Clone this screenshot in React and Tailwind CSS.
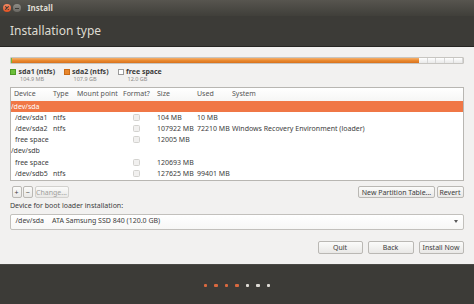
import React from 'react';

const columns = [
  { label: 'Device', w: 'w-[40px]', pad: 'pl-[3px]' },
  { label: 'Type', w: 'w-[24px]', pad: 'pl-[2px]' },
  { label: 'Mount point', w: 'w-[46px]', pad: 'pl-[2px]' },
  { label: 'Format?', w: 'w-[34px]', pad: 'pl-[2px]' },
  { label: 'Size', w: 'w-[40px]', pad: 'pl-[2px]' },
  { label: 'Used', w: 'w-[35px]', pad: 'pl-[2px]' },
];

const rows = [
  { device: '/dev/sda', top: true, selected: true },
  { device: '/dev/sda1', type: 'ntfs', check: true, size: '104 MB', used: '10 MB' },
  { device: '/dev/sda2', type: 'ntfs', check: true, size: '107922 MB', used: '72210 MB', system: 'Windows Recovery Environment (loader)' },
  { device: 'free space', check: true, size: '12005 MB' },
  { device: '/dev/sdb', top: true },
  { device: 'free space', check: true, size: '120693 MB' },
  { device: '/dev/sdb5', type: 'ntfs', check: true, size: '127625 MB', used: '99401 MB' },
];

const legend = [
  { name: 'sda1 (ntfs)', size: '104.9 MB', swatch: 'bg-[#6cbf3a] border-[#4f9a25]', w: 'w-[53.5px]' },
  { name: 'sda2 (ntfs)', size: '107.9 GB', swatch: 'bg-[#e8862c] border-[#c96a16]', w: 'w-[54px]' },
  { name: 'free space', size: '12.0 GB', swatch: 'bg-white border-[#9a9a9a]', w: 'w-[60px]' },
];

function Btn({ children, className = '', disabled }) {
  return (
    <div
      className={`flex items-center justify-center rounded-[2px] border bg-gradient-to-b from-[#fbfbfa] to-[#e9e8e6] text-[7px] leading-none ${
        disabled ? 'text-[#a09f9c] border-[#d2d1ce]' : 'text-[#3c3c3c] border-[#bab8b4]'
      } ${className}`}
    >
      {children}
    </div>
  );
}

export default function App() {
  return (
    <div className="w-[474px] h-[304px] flex flex-col bg-[#3c3b37] font-['Noto_Sans',sans-serif] text-[#3c3c3c] overflow-hidden">
      {/* Title bar */}
      <div className="h-[16px] flex items-center pl-[3px] bg-gradient-to-b from-[#57554f] to-[#403f3a]">
        <div className="w-[8px] h-[8px] rounded-full bg-gradient-to-b from-[#f58a62] to-[#df4f1d] flex items-center justify-center">
          <svg viewBox="0 0 8 8" className="w-[8px] h-[8px]">
            <path d="M2.6 2.6 L5.4 5.4 M5.4 2.6 L2.6 5.4" stroke="#3c3b37" strokeWidth="1.1" strokeLinecap="round" />
          </svg>
        </div>
        <div className="ml-[1.5px] w-[8px] h-[8px] rounded-full bg-gradient-to-b from-[#8f8d87] to-[#6a6863] flex items-center justify-center">
          <div className="w-[4px] h-[1px] bg-[#3c3b37]" />
        </div>
        <span className="ml-[7px] text-[8px] font-bold text-[#dfdbd2] leading-none">Install</span>
      </div>

      {/* Header */}
      <div className="h-[31px] flex items-center pl-[10px] border-b border-[#262522]">
        <span className="text-[12px] text-[#dfdbd2] leading-none">Installation type</span>
      </div>

      {/* Content */}
      <div className="h-[216.5px] bg-[#f2f1f0] pl-[10px] pr-[10.5px] flex flex-col">
        {/* Partition bar */}
        <div className="mt-[10px] h-[6.5px] flex border border-[#c7c5c1] rounded-[1px] overflow-hidden">
          <div className="w-[1px] bg-[#6cbf3a]" />
          <div className="w-[407px] bg-gradient-to-b from-[#f5b06a] via-[#ea8a30] to-[#d9721c]" />
          <div className="flex-1 flex bg-gradient-to-b from-[#ffffff] to-[#e9e9e9]">
            {[0, 1, 2, 3, 4].map((i) => (
              <div key={i} className="flex-1 border-r border-[#d6d6d6]" />
            ))}
          </div>
        </div>

        {/* Legend */}
        <div className="mt-[4px] flex">
          {legend.map((l) => (
            <div key={l.name} className={`flex gap-[2.5px] ${l.w}`}>
              <div className={`mt-[1.5px] w-[6px] h-[6px] border ${l.swatch}`} />
              <div className="flex flex-col">
                <span className="text-[7px] leading-[8px] font-bold text-[#3c3c3c] whitespace-nowrap">{l.name}</span>
                <span className="text-[5.5px] leading-[7px] pl-[1.5px] text-[#8d8c89] whitespace-nowrap">{l.size}</span>
              </div>
            </div>
          ))}
        </div>

        {/* Partition table */}
        <div className="mt-[4px] h-[94.5px] border border-[#b8b6b2] bg-white flex flex-col overflow-hidden">
          <div className="h-[13.5px] flex items-center text-[7px] text-[#555] bg-gradient-to-b from-white to-[#f6f6f5] shrink-0">
            {columns.map((c) => (
              <div key={c.label} className={`${c.w} ${c.pad} whitespace-nowrap`}>{c.label}</div>
            ))}
            <div className="flex-1 pl-[2px]">System</div>
          </div>
          {rows.map((r, i) => (
            <div
              key={i}
              className={`h-[11.1px] shrink-0 flex items-center text-[7px] leading-none ${
                r.selected ? 'bg-[#f07746] text-white' : 'text-[#3c3c3c]'
              }`}
            >
              <div className={`w-[40px] whitespace-nowrap ${r.top ? 'pl-0' : 'pl-[4px]'}`}>{r.device}</div>
              <div className="w-[24px] pl-[2px]">{r.type}</div>
              <div className="w-[46px]" />
              <div className="w-[34px] pl-[12px] flex">
                {r.check && <div className="w-[7px] h-[7px] rounded-[1.5px] border border-[#d3d2cf] bg-[#f1f0ef]" />}
              </div>
              <div className="w-[40px] pl-[2px] whitespace-nowrap">{r.size}</div>
              <div className="w-[35px] pl-[2px] whitespace-nowrap">{r.used}</div>
              <div className="flex-1 pl-[2px] whitespace-nowrap">{r.system}</div>
            </div>
          ))}
        </div>

        {/* Edit buttons */}
        <div className="mt-[5px] h-[12px] flex justify-between">
          <div className="flex pl-[1.5px] gap-[1.5px]">
            <Btn className="w-[10px]">+</Btn>
            <Btn className="w-[10px]">−</Btn>
            <Btn className="w-[34px]" disabled>Change...</Btn>
          </div>
          <div className="flex gap-[1.5px]">
            <Btn className="w-[77px]">New Partition Table...</Btn>
            <Btn className="w-[27px]">Revert</Btn>
          </div>
        </div>

        <div className="mt-[3px] text-[7px] leading-[9px] text-[#3c3c3c]">Device for boot loader installation:</div>

        {/* Combo */}
        <div className="mt-[3.5px] h-[16px] flex items-center border border-[#c2c0bc] rounded-[2px] bg-gradient-to-b from-white to-[#f7f7f6] text-[7px] pl-[4.5px] pr-[5px]">
          <span className="w-[36.5px]">/dev/sda</span>
          <span className="flex-1">ATA Samsung SSD 840 (120.0 GB)</span>
          <svg viewBox="0 0 4 3" className="w-[4px] h-[3px]">
            <path d="M0 0 L4 0 L2 3 Z" fill="#5a5a5a" />
          </svg>
        </div>

        {/* Dialog buttons */}
        <div className="mt-[11px] h-[13px] flex justify-end gap-[5px]">
          <Btn className="w-[45px]">Quit</Btn>
          <Btn className="w-[46px]">Back</Btn>
          <Btn className="w-[45px] border-[#8c8a86]">Install Now</Btn>
        </div>
      </div>

      {/* Footer with progress dots */}
      <div className="flex-1 border-t border-[#4a4945] flex justify-center pt-[19px]">
        <div className="flex gap-[7px] h-[3.5px]">
          {[0, 1, 2, 3].map((i) => (
            <div key={i} className="w-[3.5px] h-[3.5px] rounded-[1px] bg-[#d9693f]" />
          ))}
          {[0, 1, 2].map((i) => (
            <div key={'w' + i} className="w-[3.5px] h-[3.5px] rounded-[1px] bg-[#dedbd5]" />
          ))}
        </div>
      </div>
    </div>
  );
}
